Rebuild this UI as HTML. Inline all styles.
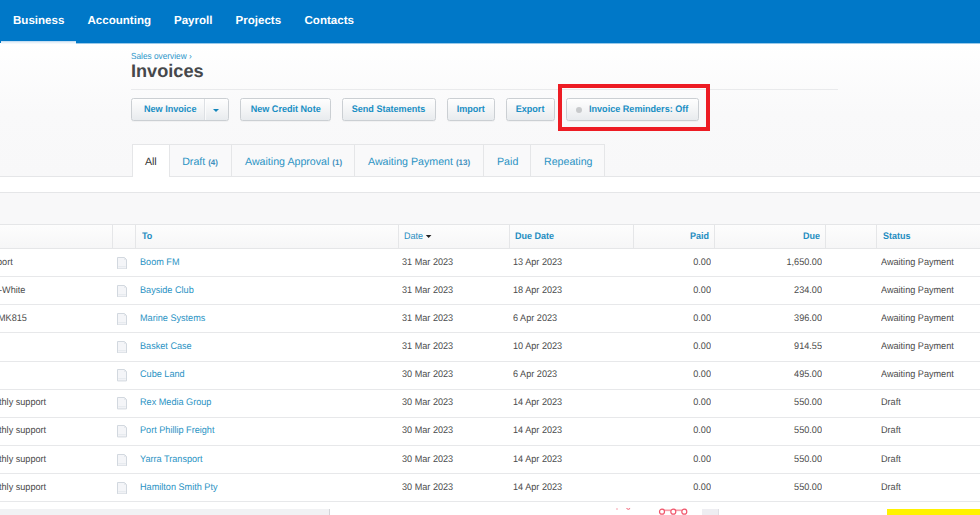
<!DOCTYPE html>
<html lang="en">
<head>
<meta charset="utf-8">
<title>Invoices</title>
<style>
*{box-sizing:border-box;margin:0;padding:0}
html,body{width:980px;height:515px;overflow:hidden;background:#fff}
body{font-family:"Liberation Sans",sans-serif;position:relative;color:#444;-webkit-font-smoothing:antialiased;text-rendering:geometricPrecision}
.abs{position:absolute}
#nav{position:absolute;left:0;top:0;width:980px;height:43px;background:#0078c8}
#nav a{position:absolute;top:14.2px;font-weight:bold;font-size:11.55px;line-height:14px;color:#fff;white-space:nowrap;text-decoration:none}
#navsel{position:absolute;left:1px;top:41px;width:75px;height:3px;background:linear-gradient(#b9d6ee,#e6f0f9 50%,#fbfdfe)}
#hdrbg{position:absolute;left:0;top:43px;width:980px;height:133px;background:linear-gradient(#ffffff 0,#f9f9fa 70px,#f8f8f9 133px)}
#crumb{position:absolute;left:130.9px;top:50.5px;font-size:8.9px;line-height:10px;color:#2a95c9;white-space:nowrap;transform:scaleX(.932);transform-origin:0 50%}
#title{position:absolute;left:131px;top:60.6px;font-size:18.15px;line-height:20px;font-weight:bold;color:#46484b;white-space:nowrap}
#hline{position:absolute;left:131px;top:89px;width:707px;height:1px;background:#e9eaec}
.btn b{display:inline-block;transform:scaleX(.955);transform-origin:50% 50%}
.btn.l b{transform-origin:0 50%}
.btn{position:absolute;top:98px;height:23px;border:1px solid #cbcfd3;border-radius:2.5px;background:linear-gradient(#fefefe,#f5f6f7 45%,#e8ebee);font-weight:bold;font-size:9.5px;line-height:21.6px;text-rendering:geometricPrecision;color:#1b8fc4;text-align:center;white-space:nowrap;box-shadow:0 1px 0 rgba(0,0,0,0.03)}
#redbox{position:absolute;left:558px;top:84px;width:152px;height:47px;border:4px solid #ed1c24}
#tabs{position:absolute;left:132px;top:144px;height:33px;width:473px;border-top:1px solid #e5e6e8;border-right:1px solid #e5e6e8;background:#f9f9fa}
.tab{position:absolute;top:0;height:32px;border-left:1px solid #e5e6e8;font-size:10.65px;line-height:34.6px;color:#2b93c4;white-space:nowrap}
.tab small{font-size:8px;font-weight:bold;color:#3f8fbd}
#tabline{position:absolute;left:0;top:176px;width:980px;height:1px;background:#e5e6e8}
#white1{position:absolute;left:0;top:177px;width:980px;height:15px;background:#fff}
#tool{position:absolute;left:0;top:192px;width:980px;height:33px;background:#f8f8f9;border-top:1px solid #e5e6e8;border-bottom:1px solid #e5e6e8}
#thead{position:absolute;left:0;top:225px;width:980px;height:24px;background:linear-gradient(#fdfdfd,#f6f6f7);border-bottom:1px solid #e5e6e8}
.vd{position:absolute;top:225px;width:1px;height:23px;background:#e5e6e8}
.th{position:absolute;top:229.5px;font-size:9.5px;line-height:14px;font-weight:bold;color:#1f8dc1;white-space:nowrap;transform:scaleX(.947);transform-origin:0 50%}
.th.r{text-align:right;transform-origin:100% 50%}
.row{position:absolute;left:0;width:980px;height:28px;border-bottom:1px solid #e7e8ea;background:#fff;font-size:9.6px;line-height:12px;color:#4b4b4b;text-rendering:geometricPrecision}
.row span{position:absolute;top:7.7px;white-space:nowrap;transform:scaleX(0.95);transform-origin:0 50%}
.row .r{text-align:right;transform-origin:100% 50%}
.row .lnk{color:#2b93c4}
.ico{position:absolute;left:117px;top:7px;width:10px;height:12.4px}
</style>
</head>
<body>
<div id="hdrbg"></div>
<div id="nav">
  <a style="left:13px">Business</a>
  <a style="left:87.5px">Accounting</a>
  <a style="left:174px">Payroll</a>
  <a style="left:235.5px">Projects</a>
  <a style="left:304.5px">Contacts</a>
</div>
<div id="navsel"></div>
<div class="abs" style="left:76px;top:43px;width:904px;height:1px;background:rgba(0,120,200,.4)"></div>

<div id="crumb">Sales overview ›</div>
<div id="title">Invoices</div>
<div id="hline"></div>

<div class="btn l" style="left:131px;width:98px;text-align:left;padding-left:12.2px"><b>New Invoice</b>
  <i class="abs" style="left:72px;top:0;width:2px;height:21px;background:linear-gradient(90deg,#dde0e4 50%,rgba(255,255,255,.7) 50%)"></i>
  <i class="abs" style="left:81.200px;top:9.700px;width:0;height:0;border-left:3px solid transparent;border-right:3px solid transparent;border-top:3.300px solid #1386bb"></i>
</div>
<div class="btn" style="left:240px;width:91px"><b>New Credit Note</b></div>
<div class="btn" style="left:342px;width:94px"><b>Send Statements</b></div>
<div class="btn" style="left:447px;width:48px"><b>Import</b></div>
<div class="btn" style="left:506px;width:49px"><b>Export</b></div>
<div class="btn l" style="left:566px;width:133px;text-align:left;padding-left:21.5px"><i class="abs" style="left:9.200px;top:7.500px;width:6.200px;height:6.200px;border-radius:50%;background:#c8cacc"></i><b>Invoice Reminders: Off</b></div>
<div id="redbox"></div>

<div id="tabs">
  <div class="tab" style="left:0;width:38px;background:#fff;height:32px;color:#333;padding-left:11.9px">All</div>
  <div class="tab" style="left:37px;width:62px;padding-left:12.2px">Draft <small>(4)</small></div>
  <div class="tab" style="left:99px;width:124px;padding-left:13px">Awaiting Approval <small>(1)</small></div>
  <div class="tab" style="left:222px;width:130px;padding-left:13px">Awaiting Payment <small>(13)</small></div>
  <div class="tab" style="left:351px;width:48px;padding-left:13px">Paid</div>
  <div class="tab" style="left:398px;width:75px;padding-left:13px">Repeating</div>
</div>
<div id="tabline"></div>
<div id="white1"></div>
<div class="abs" style="left:133px;top:176px;width:36px;height:1px;background:#fff"></div>
<div id="tool"></div>
<div id="thead"></div>
<i class="vd" style="left:112px"></i><i class="vd" style="left:135px"></i><i class="vd" style="left:398px"></i><i class="vd" style="left:509px"></i><i class="vd" style="left:633px"></i><i class="vd" style="left:714px"></i><i class="vd" style="left:825px"></i><i class="vd" style="left:876px"></i>
<div class="th" style="left:141.7px">To</div>
<div class="th" style="left:403.800px;font-weight:normal">Date <i style="display:inline-block;width:0;height:0;border-left:3px solid transparent;border-right:3px solid transparent;border-top:3px solid #222;vertical-align:1px"></i></div>
<div class="th" style="left:515px">Due Date</div>
<div class="th r" style="left:609px;width:100px">Paid</div>
<div class="th r" style="left:719.5px;width:100px">Due</div>
<div class="th" style="left:882.5px">Status</div>

<div id="rows"></div>
<div class="row" style="top:249px;height:28px"><span style="top:7.70px;left:-3px">port</span><svg class="ico" style="top:7.70px" viewBox="0 0 10 12.4"><path d="M.5.5h7l2 2v9.400h-9z" fill="#f4f5f8" stroke="#d2d8df"/><path d="M1.300 9.700h7.400" stroke="#e0e4e9" stroke-width=".8"/><path d="M7.500.7v1.800h1.800" fill="none" stroke="#dde1e7" stroke-width=".7"/></svg><span class="lnk" style="top:7.70px;left:140px">Boom FM</span><span style="top:7.70px;left:402px">31 Mar 2023</span><span style="top:7.70px;left:513px">13 Apr 2023</span><span class="r" style="top:7.70px;left:610.5px;width:100px">0.00</span><span class="r" style="top:7.70px;left:721.5px;width:100px">1,650.00</span><span style="top:7.70px;left:881px">Awaiting Payment</span></div>
<div class="row" style="top:277px;height:28px"><span style="top:7.82px;left:-1.4px">-White</span><svg class="ico" style="top:7.82px" viewBox="0 0 10 12.4"><path d="M.5.5h7l2 2v9.400h-9z" fill="#f4f5f8" stroke="#d2d8df"/><path d="M1.300 9.700h7.400" stroke="#e0e4e9" stroke-width=".8"/><path d="M7.500.7v1.800h1.800" fill="none" stroke="#dde1e7" stroke-width=".7"/></svg><span class="lnk" style="top:7.82px;left:140px">Bayside Club</span><span style="top:7.82px;left:402px">31 Mar 2023</span><span style="top:7.82px;left:513px">18 Apr 2023</span><span class="r" style="top:7.82px;left:610.5px;width:100px">0.00</span><span class="r" style="top:7.82px;left:721.5px;width:100px">234.00</span><span style="top:7.82px;left:881px">Awaiting Payment</span></div>
<div class="row" style="top:305px;height:28px"><span style="top:7.94px;left:-2.5px">MK815</span><svg class="ico" style="top:7.94px" viewBox="0 0 10 12.4"><path d="M.5.5h7l2 2v9.400h-9z" fill="#f4f5f8" stroke="#d2d8df"/><path d="M1.300 9.700h7.400" stroke="#e0e4e9" stroke-width=".8"/><path d="M7.500.7v1.800h1.800" fill="none" stroke="#dde1e7" stroke-width=".7"/></svg><span class="lnk" style="top:7.94px;left:140px">Marine Systems</span><span style="top:7.94px;left:402px">31 Mar 2023</span><span style="top:7.94px;left:513px">6 Apr 2023</span><span class="r" style="top:7.94px;left:610.5px;width:100px">0.00</span><span class="r" style="top:7.94px;left:721.5px;width:100px">396.00</span><span style="top:7.94px;left:881px">Awaiting Payment</span></div>
<div class="row" style="top:333px;height:29px"><svg class="ico" style="top:8.06px" viewBox="0 0 10 12.4"><path d="M.5.5h7l2 2v9.400h-9z" fill="#f4f5f8" stroke="#d2d8df"/><path d="M1.300 9.700h7.400" stroke="#e0e4e9" stroke-width=".8"/><path d="M7.500.7v1.800h1.800" fill="none" stroke="#dde1e7" stroke-width=".7"/></svg><span class="lnk" style="top:8.06px;left:140px">Basket Case</span><span style="top:8.06px;left:402px">31 Mar 2023</span><span style="top:8.06px;left:513px">10 Apr 2023</span><span class="r" style="top:8.06px;left:610.5px;width:100px">0.00</span><span class="r" style="top:8.06px;left:721.5px;width:100px">914.55</span><span style="top:8.06px;left:881px">Awaiting Payment</span></div>
<div class="row" style="top:362px;height:28px"><svg class="ico" style="top:7.18px" viewBox="0 0 10 12.4"><path d="M.5.5h7l2 2v9.400h-9z" fill="#f4f5f8" stroke="#d2d8df"/><path d="M1.300 9.700h7.400" stroke="#e0e4e9" stroke-width=".8"/><path d="M7.500.7v1.800h1.800" fill="none" stroke="#dde1e7" stroke-width=".7"/></svg><span class="lnk" style="top:7.18px;left:140px">Cube Land</span><span style="top:7.18px;left:402px">30 Mar 2023</span><span style="top:7.18px;left:513px">6 Apr 2023</span><span class="r" style="top:7.18px;left:610.5px;width:100px">0.00</span><span class="r" style="top:7.18px;left:721.5px;width:100px">495.00</span><span style="top:7.18px;left:881px">Awaiting Payment</span></div>
<div class="row" style="top:390px;height:28px"><span style="top:7.30px;left:-1.4px">thly support</span><svg class="ico" style="top:7.30px" viewBox="0 0 10 12.4"><path d="M.5.5h7l2 2v9.400h-9z" fill="#f4f5f8" stroke="#d2d8df"/><path d="M1.300 9.700h7.400" stroke="#e0e4e9" stroke-width=".8"/><path d="M7.500.7v1.800h1.800" fill="none" stroke="#dde1e7" stroke-width=".7"/></svg><span class="lnk" style="top:7.30px;left:140px">Rex Media Group</span><span style="top:7.30px;left:402px">30 Mar 2023</span><span style="top:7.30px;left:513px">14 Apr 2023</span><span class="r" style="top:7.30px;left:610.5px;width:100px">0.00</span><span class="r" style="top:7.30px;left:721.5px;width:100px">550.00</span><span style="top:7.30px;left:881px">Draft</span></div>
<div class="row" style="top:418px;height:28px"><span style="top:7.42px;left:-1.4px">thly support</span><svg class="ico" style="top:7.42px" viewBox="0 0 10 12.4"><path d="M.5.5h7l2 2v9.400h-9z" fill="#f4f5f8" stroke="#d2d8df"/><path d="M1.300 9.700h7.400" stroke="#e0e4e9" stroke-width=".8"/><path d="M7.500.7v1.800h1.800" fill="none" stroke="#dde1e7" stroke-width=".7"/></svg><span class="lnk" style="top:7.42px;left:140px">Port Phillip Freight</span><span style="top:7.42px;left:402px">30 Mar 2023</span><span style="top:7.42px;left:513px">14 Apr 2023</span><span class="r" style="top:7.42px;left:610.5px;width:100px">0.00</span><span class="r" style="top:7.42px;left:721.5px;width:100px">550.00</span><span style="top:7.42px;left:881px">Draft</span></div>
<div class="row" style="top:446px;height:28px"><span style="top:7.54px;left:-1.4px">thly support</span><svg class="ico" style="top:7.54px" viewBox="0 0 10 12.4"><path d="M.5.5h7l2 2v9.400h-9z" fill="#f4f5f8" stroke="#d2d8df"/><path d="M1.300 9.700h7.400" stroke="#e0e4e9" stroke-width=".8"/><path d="M7.500.7v1.800h1.800" fill="none" stroke="#dde1e7" stroke-width=".7"/></svg><span class="lnk" style="top:7.54px;left:140px">Yarra Transport</span><span style="top:7.54px;left:402px">30 Mar 2023</span><span style="top:7.54px;left:513px">14 Apr 2023</span><span class="r" style="top:7.54px;left:610.5px;width:100px">0.00</span><span class="r" style="top:7.54px;left:721.5px;width:100px">550.00</span><span style="top:7.54px;left:881px">Draft</span></div>
<div class="row" style="top:474px;height:28px"><span style="top:7.66px;left:-1.4px">thly support</span><svg class="ico" style="top:7.66px" viewBox="0 0 10 12.4"><path d="M.5.5h7l2 2v9.400h-9z" fill="#f4f5f8" stroke="#d2d8df"/><path d="M1.300 9.700h7.400" stroke="#e0e4e9" stroke-width=".8"/><path d="M7.500.7v1.800h1.800" fill="none" stroke="#dde1e7" stroke-width=".7"/></svg><span class="lnk" style="top:7.66px;left:140px">Hamilton Smith Pty</span><span style="top:7.66px;left:402px">30 Mar 2023</span><span style="top:7.66px;left:513px">14 Apr 2023</span><span class="r" style="top:7.66px;left:610.5px;width:100px">0.00</span><span class="r" style="top:7.66px;left:721.5px;width:100px">550.00</span><span style="top:7.66px;left:881px">Draft</span></div>

<div class="abs" style="left:0;top:509px;width:329px;height:6px;background:#f1f2f4"></div>
<div class="abs" style="left:329px;top:509px;width:1px;height:6px;background:#d3d5d9"></div>
<svg class="abs" style="left:610px;top:505px" width="90" height="10" viewBox="0 0 90 10">
  <rect x="6" y="3.600" width="2" height=".8" fill="#f58a98"/>
  <path d="M16.500 3.500q1.800 1.600 3.600 0" fill="none" stroke="#f0566c" stroke-width="1"/>
  <path d="M52 5.300h22.500" stroke="#f7a0ab" stroke-width="1.700"/>
  <circle cx="52" cy="6.700" r="2.500" fill="#fff" stroke="#f0566c" stroke-width="1.200"/>
  <circle cx="63.3" cy="6.700" r="2.500" fill="#fff" stroke="#f0566c" stroke-width="1.200"/>
  <circle cx="74.3" cy="6.700" r="2.500" fill="#fff" stroke="#f0566c" stroke-width="1.200"/>
</svg>
<div class="abs" style="left:702px;top:509px;width:17px;height:6px;background:#eeeef2;border-right:1px solid #dfe0e5"></div>
<div class="abs" style="left:886.5px;top:509px;width:94px;height:6px;background:#fff200"></div>
</body>
</html>
